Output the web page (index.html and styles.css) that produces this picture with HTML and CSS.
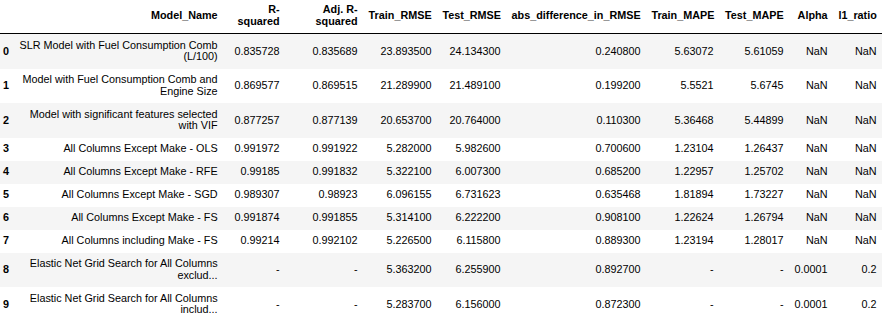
FILE: index.html
```html
<!DOCTYPE html>
<html lang="en">
<head>
  <meta charset="UTF-8">
  <title>Model results</title>
  <link rel="stylesheet" href="styles.css">
</head>
<body>
  <table class="dataframe">
    <thead>
      <tr>
        <th class="c-idx"></th>
        <th class="c-name">Model_Name</th>
        <th class="c-rsq">R-squared</th>
        <th class="c-adj">Adj. R-squared</th>
        <th class="c-trmse">Train_RMSE</th>
        <th class="c-tsrmse">Test_RMSE</th>
        <th class="c-diff">abs_difference_in_RMSE</th>
        <th class="c-trmape">Train_MAPE</th>
        <th class="c-tsmape">Test_MAPE</th>
        <th class="c-alpha">Alpha</th>
        <th class="c-l1">l1_ratio</th>
      </tr>
    </thead>
    <tbody>
      <tr>
        <th>0</th><td>SLR Model with Fuel Consumption Comb (L/100)</td><td>0.835728</td><td>0.835689</td><td>23.893500</td><td>24.134300</td><td>0.240800</td><td>5.63072</td><td>5.61059</td><td>NaN</td><td>NaN</td>
      </tr>
      <tr>
        <th>1</th><td>Model with Fuel Consumption Comb and Engine Size</td><td>0.869577</td><td>0.869515</td><td>21.289900</td><td>21.489100</td><td>0.199200</td><td>5.5521</td><td>5.6745</td><td>NaN</td><td>NaN</td>
      </tr>
      <tr>
        <th>2</th><td>Model with significant features selected with VIF</td><td>0.877257</td><td>0.877139</td><td>20.653700</td><td>20.764000</td><td>0.110300</td><td>5.36468</td><td>5.44899</td><td>NaN</td><td>NaN</td>
      </tr>
      <tr>
        <th>3</th><td>All Columns Except Make - OLS</td><td>0.991972</td><td>0.991922</td><td>5.282000</td><td>5.982600</td><td>0.700600</td><td>1.23104</td><td>1.26437</td><td>NaN</td><td>NaN</td>
      </tr>
      <tr>
        <th>4</th><td>All Columns Except Make - RFE</td><td>0.99185</td><td>0.991832</td><td>5.322100</td><td>6.007300</td><td>0.685200</td><td>1.22957</td><td>1.25702</td><td>NaN</td><td>NaN</td>
      </tr>
      <tr>
        <th>5</th><td>All Columns Except Make - SGD</td><td>0.989307</td><td>0.98923</td><td>6.096155</td><td>6.731623</td><td>0.635468</td><td>1.81894</td><td>1.73227</td><td>NaN</td><td>NaN</td>
      </tr>
      <tr>
        <th>6</th><td>All Columns Except Make - FS</td><td>0.991874</td><td>0.991855</td><td>5.314100</td><td>6.222200</td><td>0.908100</td><td>1.22624</td><td>1.26794</td><td>NaN</td><td>NaN</td>
      </tr>
      <tr>
        <th>7</th><td>All Columns including Make - FS</td><td>0.99214</td><td>0.992102</td><td>5.226500</td><td>6.115800</td><td>0.889300</td><td>1.23194</td><td>1.28017</td><td>NaN</td><td>NaN</td>
      </tr>
      <tr>
        <th>8</th><td>Elastic Net Grid Search for All Columns exclud...</td><td>-</td><td>-</td><td>5.363200</td><td>6.255900</td><td>0.892700</td><td>-</td><td>-</td><td>0.0001</td><td>0.2</td>
      </tr>
      <tr>
        <th>9</th><td>Elastic Net Grid Search for All Columns includ...</td><td>-</td><td>-</td><td>5.283700</td><td>6.156000</td><td>0.872300</td><td>-</td><td>-</td><td>0.0001</td><td>0.2</td>
      </tr>
    </tbody>
  </table>
</body>
</html>
```

FILE: styles.css
```css
* { box-sizing: border-box; }
body {
  margin: 0;
  background: #fff;
  color: #000;
  font-family: "Liberation Sans", Arial, sans-serif;
}
.dataframe {
  margin-top: -1.5px;
  width: 882px;
  table-layout: fixed;
  border-collapse: collapse;
  border-spacing: 0;
  font-size: 10.8px;
}
.dataframe thead { border-bottom: 1px solid #000; }
.dataframe th,
.dataframe td {
  padding: 5.75px 5.4px;
  line-height: 11.5px;
  text-align: right;
  vertical-align: middle;
  font-weight: normal;
}
.dataframe th { font-weight: bold; }
.dataframe tbody th {
  text-align: left;
  padding-left: 3px;
  padding-right: 4px;
}
.dataframe tbody tr:nth-child(odd) { background: #f5f5f5; }

/* column widths */
.c-idx    { width: 13px; }
.c-name   { width: 210px; }
.c-rsq    { width: 62px; }
.c-adj    { width: 78px; }
.c-trmse  { width: 74px; }
.c-tsrmse { width: 69px; }
.c-diff   { width: 140px; }
.c-trmape { width: 73px; }
.c-tsmape { width: 70px; }
.c-alpha  { width: 44px; }
.c-l1     { width: 49px; }
```
